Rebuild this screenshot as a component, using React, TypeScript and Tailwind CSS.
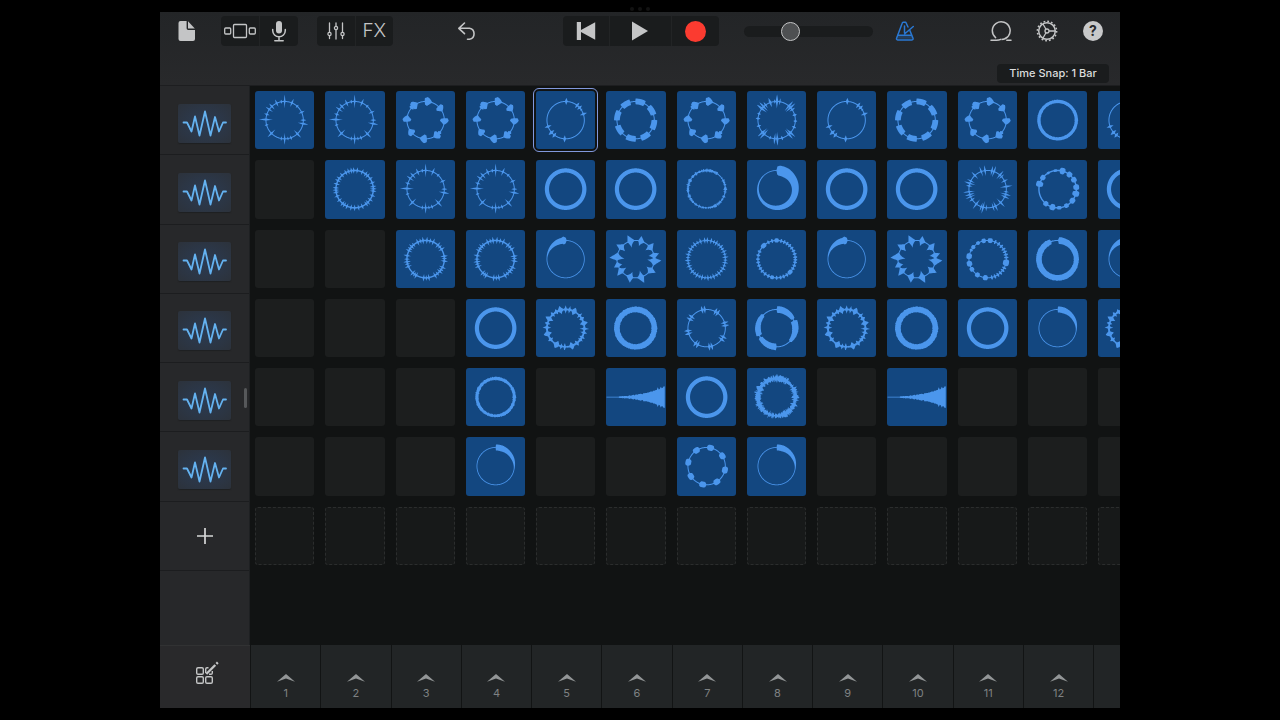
import { useState } from "react";

type Shape = "spike" | "block" | "heart" | "horn" | "dot";
type Mark = [angle: number, amp: number, width: number];

interface Loop {
  base?: number;
  noise?: number;
  shape?: Shape;
  marks?: Mark[];
  // amplitude keyframes round the circle, [angle, amp]
  envelope?: [number, number][];
}

const even = (angles: number[], amp: number, width: number): Mark[] => angles.map((a) => [a, amp, width]);

const LOOPS: Record<string, Loop> = {
  burst: {
    shape: "spike",
    marks: [[0, 7, 5], [23, 4.5, 6], [42, 2, 7], [65, 3.5, 6], [90, 3, 6], [101, 5.5, 6], [137, 5.5, 6], [160, 2.4, 6], [170, 2, 5], [180, 6, 5], [190, 2.4, 5], [225, 5.5, 6], [255, 2, 6], [272, 7, 6], [288, 3, 6], [305, 4.5, 5], [317, 4, 6], [335, 4, 6], [350, 2, 7]],
  },
  hearts: {
    shape: "heart",
    marks: [[-2, 4.4, 23], [43, 4.2, 20], [85, 4.4, 20], [129, 2, 9], [136, 4.4, 20], [177, 4.4, 22], [222, 4, 21], [266, 4.4, 20], [309, 2.6, 9], [315, 4.4, 21]],
  },
  sparse: {
    shape: "spike",
    marks: [[2, 3.6, 9], [38, 3.6, 8], [48, 3.2, 9], [56, 1.5, 6], [71, 3.8, 8], [183, 3.6, 9], [217, 3.2, 9], [229, 3.8, 10], [250, 3.8, 8]],
  },
  segments: { shape: "block", marks: even([14, 59, 104, 149, 194, 239, 284, 329], 2.9, 28) },
  shards: {
    shape: "spike",
    marks: [[340, 5, 8], [354, 2.4, 5], [1, 7, 8], [10, 3.6, 5], [41, 6.4, 7], [48, 6.4, 7], [56, 3.4, 6], [74, 2.4, 9], [93, 2, 9], [112, 2.4, 8], [132, 6.4, 7], [139, 6, 7], [163, 2.4, 8], [178, 7, 7], [186, 5.8, 6], [200, 2, 7], [222, 6.4, 7], [229, 6.4, 7], [252, 2.4, 7], [275, 2.4, 8], [290, 2, 8], [308, 6.4, 8], [316, 6, 7], [324, 3.6, 6]],
  },
  thin: { base: 1.6, noise: 0.4 },
  ring: { base: 2.1 },
  fat: { base: 2.7, noise: 0.7 },
  rough: { base: 1.4, noise: 1 },
  ticks: {
    shape: "spike",
    base: 0.7,
    marks: even([350, 357, 8, 24, 36, 44, 56, 70, 82, 89, 96, 110, 124, 135, 142, 156, 168, 180, 191, 204, 213, 220, 234, 248, 260, 267, 274, 286, 297, 305, 318, 332, 341], 3.3, 6),
  },
  prickle: {
    shape: "spike",
    base: 0.7,
    marks: [...even([352, 4, 24, 41, 58, 81, 96, 116, 131, 150, 170, 186, 210, 223, 247, 262, 281, 297, 312, 335], 3.8, 6), ...even([14, 49, 88, 124, 141, 178, 216, 255, 270, 304, 320, 344], 2.8, 6)],
  },
  fuzz: { base: 0.6, noise: 2.3 },
  swoosh: { envelope: [[0, 1], [2, 4], [8, 5], [30, 5], [55, 4.2], [90, 3.4], [140, 2.8], [180, 2.2], [230, 1.4], [280, 0.7], [320, 0.4], [360, 0.4]] },
  whiskers: {
    shape: "spike",
    marks: [[352, 5.5, 6], [13, 5, 6], [20, 6, 6], [41, 5.5, 6], [48, 3.4, 5], [64, 4, 6], [82, 6.5, 6], [98, 3, 5], [106, 5.5, 6], [114, 5, 6], [136, 6, 6], [155, 5.5, 6], [163, 4.5, 5], [184, 3.4, 5], [194, 6.5, 6], [200, 4.5, 5], [217, 6, 6], [236, 3.4, 6], [246, 5.5, 5], [253, 5, 6], [262, 6, 5], [280, 3.4, 6], [288, 6, 6], [296, 4.5, 5], [317, 5, 6], [340, 5.5, 5]],
  },
  beads: {
    shape: "dot",
    base: 0.7,
    marks: [[353, 1.3, 12], [15, 3.2, 17], [39, 2.8, 16], [60, 2.7, 16], [84, 2.9, 17], [104, 3.4, 17], [128, 2.7, 17], [152, 2.2, 14], [175, 1.8, 14], [196, 3.1, 17], [219, 2.5, 15], [286, 3.5, 18], [308, 2.5, 16], [330, 1.2, 10]],
  },
  rise: { envelope: [[0, 3], [3, 0.4], [275, 0.4], [295, 0.9], [315, 1.8], [335, 2.7], [348, 3], [354, 4], [359, 3]] },
  thorns: {
    shape: "horn",
    marks: [[341, 6.5, 28], [14, 5.2, 26], [48, 5.5, 27], [76, 5.5, 24], [93, 7, 30], [124, 5.5, 28], [160, 6.5, 27], [194, 5.5, 28], [228, 6, 26], [249, 4.5, 24], [273, 7.5, 30], [307, 5.5, 27]],
  },
  fine: {
    shape: "spike",
    marks: [...even([2, 14, 31, 49, 66, 84, 101, 120, 139, 158, 176, 194, 211, 229, 248, 266, 284, 302, 321, 341, 354], 3.4, 6), ...even([23, 40, 57, 75, 93, 110, 129, 148, 167, 185, 202, 220, 239, 257, 275, 293, 311, 331], 2.3, 6)],
  },
  bits: {
    shape: "dot",
    base: 0.6,
    marks: [[0, 2.1, 13], [316, 2.2, 18], [134, 2.1, 16], [194, 1.9, 12], ...even([14, 24, 34, 44, 54, 64, 74, 84, 92, 100, 110, 120, 147, 158, 168, 180, 206, 218, 230, 240, 250, 260, 270, 282, 294, 334, 346], 2, 5)],
  },
  pebbles: {
    shape: "dot",
    marks: [[8, 2.4, 15], [348, 2.2, 13], [329, 1.8, 11], [310, 2, 12], [299, 1.6, 7], [279, 2.7, 18], [256, 2.7, 17], [237, 2.2, 14], [213, 2.4, 14], [187, 2.6, 15], [101, 3, 20], ...even([24, 36, 47, 58, 67, 76, 85, 118, 127, 137, 147, 157, 167], 2.2, 5)],
  },
  broken: { noise: 0.5, envelope: [[0, 0.5], [2, 0.6], [4, 3.2], [40, 3], [90, 2.4], [160, 2.8], [220, 2.8], [280, 2.7], [325, 2.8], [338, 2.4], [340, 0.6], [360, 0.5]] },
  gravel: {
    shape: "spike",
    base: 0.8,
    noise: 0.6,
    marks: [[344, 4.2, 17], [0, 3.9, 8], [12, 3.6, 7], [27, 4, 18], [48, 3.7, 8], [59, 3.3, 10], [75, 4.2, 16], [92, 4.4, 8], [104, 3.5, 10], [119, 3.7, 8], [128, 3, 9], [143, 3.5, 10], [161, 4, 18], [183, 4.2, 8], [194, 3, 8], [209, 4.2, 19], [233, 3.3, 10], [253, 4.4, 18], [272, 4.2, 8], [285, 3.3, 8], [300, 4.2, 16], [317, 3.5, 9], [331, 3.2, 10]],
  },
  pairs: { shape: "spike", marks: even([346, 354, 28, 36, 73, 82, 118, 127, 164, 172, 208, 216, 253, 262, 298, 307], 4.1, 8) },
  arcs: {
    noise: 0.3,
    envelope: [[0, 0.5], [1, 0.5], [2, 3.3], [25, 3.1], [48, 2.6], [60, 2], [62, 0.5], [66, 0.5], [68, 3.3], [100, 3], [132, 1.8], [136, 0.5], [180, 0.5], [182, 3.3], [210, 3], [238, 2.2], [241, 0.5], [246, 0.5], [248, 2.8], [270, 2.8], [300, 2.2], [312, 2], [316, 0.5], [360, 0.5]],
  },
  fall: { envelope: [[0, 0.4], [1, 3], [20, 3], [40, 2.3], [65, 1.6], [90, 0.6], [100, 0.4], [360, 0.4]] },
  jagged: { base: 1.9, noise: 3.8 },
  capsules: { shape: "dot", marks: even([12, 57, 102, 147, 192, 237, 282, 327], 2.9, 21) },
};

const COLUMNS = 13;

const TRACKS: string[][] = [
  ["burst", "burst", "hearts", "hearts", "sparse", "segments", "hearts", "shards", "sparse", "segments", "hearts", "thin", "sparse"],
  ["", "ticks", "burst", "burst", "ring", "ring", "fuzz", "swoosh", "ring", "ring", "whiskers", "beads", "ring"],
  ["", "", "prickle", "prickle", "rise", "thorns", "fine", "bits", "rise", "thorns", "pebbles", "broken", "rise"],
  ["", "", "", "ring", "gravel", "fat", "pairs", "arcs", "gravel", "fat", "ring", "fall", "gravel"],
  ["", "", "", "rough", "", "cone", "ring", "jagged", "", "cone", "", "", ""],
  ["", "", "", "fall", "", "", "capsules", "fall", "", "", "", "", ""],
];

// repeatable pseudo-random value between 0 and 1
function hash(n: number) {
  let h = Math.imul(n + 17, 2654435761);
  h = Math.imul(h ^ (h >>> 15), 2246822519);
  return ((h ^ (h >>> 13)) >>> 0) / 4294967296;
}

function markLevel(shape: Shape, distance: number, amp: number, width: number) {
  const half = width / 2;
  if (shape === "heart") {
    if (distance < 0 || distance > width) return 0;
    const t = distance / width;
    return t < 0.3 ? amp * (0.75 + t * 0.8) : amp * (1 - Math.pow((t - 0.3) / 0.7, 1.3));
  }
  if (shape === "horn") {
    const t = distance < 0 ? -distance / (width * 0.3) : distance / (width * 0.7);
    return t > 1 ? 0 : amp * Math.pow(1 - t, 1.7);
  }
  const d = Math.abs(distance);
  if (d > half) return 0;
  if (shape === "block") return amp;
  if (shape === "dot") return amp * Math.pow(1 - Math.pow(d / half, 4), 0.5);
  return amp * (1 - d / half);
}

function level(loop: Loop, angle: number) {
  let amp = loop.base ?? 0.5;
  if (loop.envelope) {
    const i = loop.envelope.findIndex(([a]) => a > angle);
    const [a0, v0] = loop.envelope[i < 0 ? loop.envelope.length - 1 : Math.max(0, i - 1)];
    const [a1, v1] = i < 0 ? [a0 + 1, v0] : loop.envelope[i];
    amp = v0 + ((v1 - v0) * (angle - a0)) / (a1 - a0);
  }
  for (const [at, peak, width] of loop.marks ?? []) {
    const distance = ((angle - at + 540) % 360) - 180;
    amp = Math.max(amp, markLevel(loop.shape ?? "spike", distance, peak, width));
  }
  if (loop.noise && amp > 0.55) amp += (hash(angle) - 0.35) * loop.noise;
  return Math.max(0.4, amp);
}

function ringPath(loop: Loop) {
  const radius = 18.6;
  const step = loop.noise ? 2 : 1;
  const outer: string[] = [];
  const inner: string[] = [];
  for (let angle = 0; angle < 360; angle += step) {
    const rad = (angle * Math.PI) / 180;
    const amp = level(loop, angle);
    const point = (r: number) => `${(29 + Math.sin(rad) * r).toFixed(2)} ${(29 - Math.cos(rad) * r).toFixed(2)}`;
    outer.push(point(radius + amp));
    inner.push(point(radius - amp));
  }
  return `M${outer.join("L")}ZM${inner.join("L")}Z`;
}

function conePath() {
  const top: string[] = [];
  const bottom: string[] = [];
  for (let x = 0; x <= 58; x += 1) {
    const n = hash(x);
    const amp = 0.3 + 11.5 * Math.pow(x / 58, 2.9) * (0.85 + 0.3 * n) + (x > 12 ? n * 0.7 : 0);
    top.push(`${x} ${(29 - amp).toFixed(2)}`);
    bottom.unshift(`${x} ${(29 + amp).toFixed(2)}`);
  }
  return `M${top.join("L")}L${bottom.join("L")}Z`;
}

const PATHS: Record<string, string> = { cone: conePath() };
for (const name of Object.keys(LOOPS)) PATHS[name] = ringPath(LOOPS[name]);

function Cell({ loop, label, selected, onSelect }: { loop: string; label: string; selected: boolean; onSelect: () => void }) {
  if (!loop) return <button aria-label={label} className="block w-full h-full rounded-[3px] bg-[#1c1e1e]" />;
  return (
    <button
      aria-label={label}
      onClick={onSelect}
      className={`block w-full h-full rounded-[3px] bg-[#134780] ${selected ? "outline outline-[#8198dc] outline-offset-2" : ""}`}
    >
      <svg viewBox="0 0 58 58" className="w-full h-full" fill="#4b96ec" fillRule="evenodd">
        <path d={PATHS[loop]} />
      </svg>
    </button>
  );
}

function TrackHeader({ index }: { index: number }) {
  return (
    <div className="relative flex items-center justify-center pt-[6px] pr-px border-b border-[#1c1d1f]">
      <button
        aria-label={`Track ${index + 1}`}
        className="w-[53px] h-[39px] rounded-xs flex items-center justify-center bg-radial from-[#2b3b53] to-[#2c323b] shadow-[0_1px_1px_#1f2022]"
      >
        <svg viewBox="0 0 53 39" className="w-full h-full" fill="none" stroke="#64b2f0" strokeWidth="1.8" strokeLinejoin="round" strokeLinecap="round">
          <path d="M5.5 18.5H9L13.5 27.5L17 12.5L21.5 31.5L27 7.5L32.5 31.5L37 13L41 27.5L45 18.5H48" />
        </svg>
      </button>
      {index === 4 && <span className="absolute right-[2px] w-[3px] h-5 -mt-1 rounded-full bg-[#56585a]" />}
    </div>
  );
}

function Toolbar() {
  const [volume, setVolume] = useState(34);
  const icon = "flex items-center justify-center h-[30px] w-[22px] text-[#c4c5c6]";
  const half = "flex items-center justify-center h-full flex-1 text-[#c4c5c6]";

  return (
    <div className="flex items-center justify-between px-4 pt-1">
      <div className="flex items-center">
        <button aria-label="My songs" className="flex items-center justify-center h-[30px] w-[21px]">
          <svg width="18" height="22" viewBox="0 0 18 22" fill="#c4c5c6">
            <path d="M2.5 1H8.6V8.3Q8.6 9.9 10.2 9.9H17V19A2 2 0 0 1 15 21H2.5A2 2 0 0 1 .5 19V3A2 2 0 0 1 2.5 1Z" />
            <path d="M10 1.2L16.8 8.4H10Z" />
          </svg>
        </button>
        <div className="ml-6 flex w-[77px] h-[30px] rounded bg-[#1a1c1d]">
          <button aria-label="Browser" className={`${half} border-r border-[#222425]`}>
            <svg width="32" height="16" viewBox="0 0 32 16" fill="none" stroke="currentColor" strokeWidth="1.3">
              <rect x="9.5" y="1.5" width="13" height="13" rx="1" />
              <rect x=".7" y="5" width="6" height="6" rx="1" />
              <rect x="25.3" y="5" width="6" height="6" rx="1" />
            </svg>
          </button>
          <button aria-label="Instrument" className={half}>
            <svg width="16" height="22" viewBox="0 0 16 22" fill="none" stroke="currentColor" strokeWidth="1.5" strokeLinecap="round">
              <rect x="5" y="1" width="6" height="12.5" rx="3" fill="currentColor" stroke="none" />
              <path d="M1.7 9.5V10.5A6.3 6.3 0 0 0 14.3 10.5V9.5M8 17V20.5M3.8 20.7H12.2" />
            </svg>
          </button>
        </div>
        <div className="ml-[19px] flex w-[76px] h-[30px] rounded bg-[#1a1c1d]">
          <button aria-label="Track controls" className={`${half} border-r border-[#222425]`}>
            <svg width="18" height="18" viewBox="0 0 18 18" fill="none" stroke="currentColor" strokeWidth="1.3" strokeLinecap="round">
              <path d="M2.5 1V10M2.5 14V16.5M9 1V4M9 8V17M15.5 1V10M15.5 14V16.5" />
              <circle cx="2.5" cy="12" r="1.6" />
              <circle cx="9" cy="6" r="1.6" />
              <circle cx="15.5" cy="12" r="1.6" />
            </svg>
          </button>
          <button className={`${half} text-[19px] font-light`}>FX</button>
        </div>
        <button aria-label="Undo" className="ml-[53px] flex items-center justify-center h-[30px] w-[42px]">
          <svg width="20" height="20" viewBox="0 0 20 20" fill="none" stroke="#c4c5c6" strokeWidth="1.6" strokeLinecap="round" strokeLinejoin="round">
            <path d="M7.5 2L1.8 7.3L7.5 12.6M2.2 7.3H12.5A5.6 5.6 0 0 1 12.5 18.3H10.5" />
          </svg>
        </button>
      </div>

      <div className="flex items-center">
        <div className="flex w-[156px] h-[30px] rounded bg-[#1a1c1d] text-[#c4c5c6]">
          <button aria-label="Go to beginning" className="w-[47px] flex items-center justify-center border-r border-[#222425]">
            <svg width="20" height="18" viewBox="0 0 20 18" fill="currentColor">
              <path d="M.8 0H5V8L19.2 .2V17.8L5 10V18H.8Z" />
            </svg>
          </button>
          <button aria-label="Play" className="w-[62px] flex items-center justify-center border-r border-[#222425]">
            <svg width="18" height="20" viewBox="0 0 18 20" fill="currentColor">
              <path d="M1 .5L17 10L1 19.5Z" />
            </svg>
          </button>
          <button aria-label="Record" className="w-[47px] flex items-center justify-center">
            <span className="w-[21px] h-[21px] rounded-full bg-[#fb3b30]" />
          </button>
        </div>
        <input
          type="range"
          aria-label="Master volume"
          value={volume}
          onChange={(e) => setVolume(Number(e.target.value))}
          className="ml-[25px] w-[129px] h-[11px] appearance-none rounded-full bg-[#1a1c1d] [&::-webkit-slider-thumb]:appearance-none [&::-webkit-slider-thumb]:w-[19px] [&::-webkit-slider-thumb]:h-[19px] [&::-webkit-slider-thumb]:rounded-full [&::-webkit-slider-thumb]:bg-[#4e5052] [&::-webkit-slider-thumb]:border [&::-webkit-slider-thumb]:border-solid [&::-webkit-slider-thumb]:border-[#c4c5c6]"
        />
        <button aria-label="Metronome" className={`${icon} ml-[21px]`}>
          <svg width="20" height="20" viewBox="0 0 20 20" fill="none" stroke="#2a78d2" strokeWidth="1.5" strokeLinejoin="round" strokeLinecap="round">
            <path d="M8.2 1.2H10.8L13 6M14.9 9.6L18 17.2Q18.4 18.9 17 18.9H2.6Q1.2 18.9 1.6 17.2L7 2.8Q7.4 1.2 8.2 1.2" />
            <path d="M3 14.3H16.5M9.5 5V12M9.8 12.8L18.3 5.5" />
            <path d="M3 15H17L17.5 17.8H2.2Z" fill="#2a78d2" fillOpacity=".3" stroke="none" />
          </svg>
        </button>
      </div>

      <div className="flex items-center gap-6">
        <button aria-label="Loop browser" className={icon}>
          <svg width="22" height="21" viewBox="0 0 22 21" fill="none" stroke="currentColor" strokeWidth="1.5" strokeLinecap="round">
            <path d="M1 19.3H6.5Q9 19.2 10.8 18.4M21 19.3H16.8" />
            <path d="M5.6 16.6A8.9 8.9 0 1 1 11.5 18.6Q14.5 18.4 16.9 16.2" />
          </svg>
        </button>
        <button aria-label="Settings" className={icon}>
          <svg width="22" height="22" viewBox="0 0 22 22" fill="none" stroke="currentColor" strokeWidth="1.3">
            <circle cx="11" cy="11" r="8.3" strokeWidth="1.5" />
            <circle cx="11" cy="11" r="9.6" strokeWidth="1.6" strokeDasharray="1.75 2.02" />
            <circle cx="11" cy="11" r="2" />
            <path d="M13 11H19M10 9.2L7 4M10 12.8L7 18" />
          </svg>
        </button>
        <button aria-label="Help" className={icon}>
          <span className="w-5 h-5 rounded-full bg-[#c8c9ca] text-[#26282a] text-sm leading-5 font-bold text-center">?</span>
        </button>
      </div>
    </div>
  );
}

export default function App() {
  const [selected, setSelected] = useState("0-4");

  return (
    <div className="min-h-screen bg-black py-3 flex flex-col font-['Inter',sans-serif] overflow-hidden">
      <div className="relative w-full max-w-[960px] mx-auto flex-1 flex flex-col bg-[#111313]">
        <div className="absolute -top-1 left-1/2 -translate-x-1/2 flex gap-1">
          {[0, 1, 2].map((i) => (
            <span key={i} className="w-1 h-1 -mt-px rounded-full bg-[#121212]" />
          ))}
        </div>

        <header className="h-[74px] flex flex-col justify-between bg-linear-to-b from-[#232527] to-[#28292b] border-b border-[#1d1e20]">
          <Toolbar />
          <div className="flex justify-end pr-[11px] pb-[2px]">
            <button className="w-28 h-[19px] rounded-sm bg-[#1a1c1d] text-[11px] leading-[19px] text-[#dcdddd] font-medium">Time Snap: 1 Bar</button>
          </div>
        </header>

        <main className="flex-1 flex">
          <aside className="w-[90px] shrink-0 bg-[#27282a] border-r border-[#1e2022]">
            <div className="grid grid-rows-7 h-[485px]">
              {TRACKS.map((_, i) => (
                <TrackHeader key={i} index={i} />
              ))}
              <button aria-label="Add track" className="flex items-center justify-center border-b border-[#1c1d1f]">
                <svg width="16" height="16" viewBox="0 0 16 16" fill="none" stroke="#d6d7d8" strokeWidth="1.7">
                  <path d="M8 0V16M0 8H16" />
                </svg>
              </button>
            </div>
          </aside>

          <div className="flex-1 min-w-0 overflow-hidden">
            <div className="w-[105%] grid grid-cols-13 grid-rows-7 h-[485px]">
              {TRACKS.map((track, row) =>
                track.map((loop, col) => (
                  <div key={`${row}-${col}`} className="pt-[5px] pb-[6px] pl-[5px] pr-[6px]">
                    <Cell
                      loop={loop}
                      label={`Track ${row + 1}, column ${col + 1}`}
                      selected={selected === `${row}-${col}`}
                      onSelect={() => setSelected(`${row}-${col}`)}
                    />
                  </div>
                ))
              )}
              {[...Array(COLUMNS)].map((_, col) => (
                <div key={col} className="pt-[5px] pb-[6px] pl-[5px] pr-[6px]">
                  <div className="h-full rounded-[3px] bg-[#171919] border border-dashed border-[#2b2d2d]" />
                </div>
              ))}
            </div>
          </div>
        </main>

        <footer className="h-[63px] flex">
          <div className="w-[90px] shrink-0 flex items-center justify-center bg-[#29292b] border-t border-[#313233]">
            <button aria-label="Edit cells">
              <svg width="24" height="24" viewBox="0 0 24 24" fill="none" stroke="#c4c5c6" strokeWidth="1.4" className="ml-1 mb-2">
                <rect x="1.7" y="6.7" width="6.6" height="6.6" rx="1.3" />
                <rect x="1.7" y="15.7" width="6.6" height="6.6" rx="1.3" />
                <rect x="10.7" y="15.7" width="6.6" height="6.6" rx="1.3" />
                <path d="M13.5 6.7H12Q10.7 6.7 10.7 8V12M14 13.3H16Q17.3 13.3 17.3 12V10" />
                <path d="M11.3 13L20.3 4" strokeWidth="2.4" />
                <path d="M21.4 2.8L22.8 1.4" strokeWidth="2.4" />
              </svg>
            </button>
          </div>
          <div className="flex-1 min-w-0 overflow-hidden">
            <div className="w-[105%] h-full grid grid-cols-13">
              {[...Array(COLUMNS)].map((_, col) => (
                <button
                  key={col}
                  aria-label={`Trigger column ${col + 1}`}
                  className="flex flex-col items-center justify-end pb-2 gap-1 bg-[#222526] border-l border-[#121414] text-[11px] leading-[14px] text-[#7f8283]"
                >
                  <svg width="18" height="8" viewBox="0 0 18 8" fill="#939697">
                    <path d="M9 0L18 7.8L9 4.6L0 7.8Z" />
                  </svg>
                  <span className="h-[14px]">{col < COLUMNS - 1 && col + 1}</span>
                </button>
              ))}
            </div>
          </div>
        </footer>
      </div>
    </div>
  );
}
